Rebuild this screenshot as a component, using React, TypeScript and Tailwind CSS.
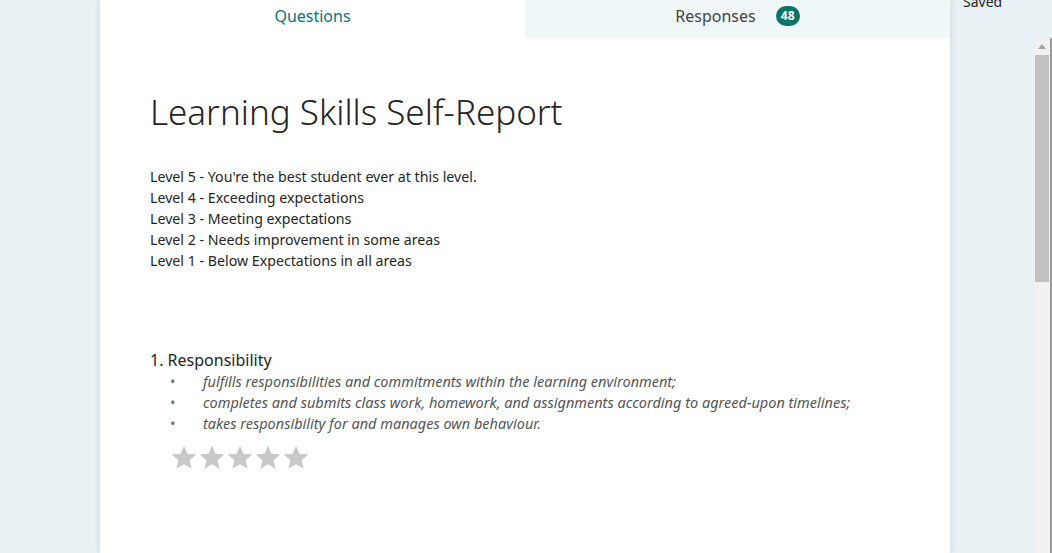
const levels = [
  "Level 5 - You're the best student ever at this level.",
  "Level 4 - Exceeding expectations",
  "Level 3 - Meeting expectations",
  "Level 2 - Needs improvement in some areas",
  "Level 1 - Below Expectations in all areas",
];

const bullets = [
  "fulfills responsibilities and commitments within the learning environment;",
  "completes and submits class work, homework, and assignments according to agreed-upon timelines;",
  "takes responsibility for and manages own behaviour.",
];

function Star() {
  return (
    <svg width="28" height="27" viewBox="0 0 24 24" className="fill-[#c8c8c8]">
      <path d="M12 1.5l3.1 7.2 7.8.6-5.9 5.1 1.8 7.6L12 17.9 5.2 22l1.8-7.6-5.9-5.1 7.8-.6z" />
    </svg>
  );
}

export default function App() {
  return (
    <div className="flex h-[553px] w-full overflow-hidden bg-[#e8f1f4] font-['Noto_Sans',sans-serif] text-[#252525]">
      <div className="relative flex-1">
        <div className="ml-[100px] flex h-full w-[850px] flex-col shadow-[0_0_8px_rgba(0,0,0,0.12)]">
          <div className="flex h-[38px] shrink-0">
            <div className="flex w-[425px] items-center justify-center bg-white pb-[6px] text-[16px] text-[#03787c]">
              Questions
            </div>
            <div className="flex w-[425px] items-center justify-center gap-5 bg-[#f0f7f9] pb-[6px] text-[16px] text-[#444]">
              <span>Responses</span>
              <span className="flex h-[20px] min-w-[24px] items-center justify-center rounded-full bg-[#077568] px-1 text-[12px] font-bold text-white">
                48
              </span>
            </div>
          </div>
          <div className="flex-1 bg-white px-[50px] pt-[50px]">
            <h1 className="text-[35px] font-light leading-[48px] text-[#252525]">
              Learning Skills Self-Report
            </h1>
            <div className="mt-[30px] text-[14.2px] leading-[21px]">
              {levels.map((l) => (
                <div key={l}>{l}</div>
              ))}
            </div>
            <div className="mt-[77px]">
              <div className="text-[16px] leading-[24px]">1. Responsibility</div>
              <ul className="-mt-[1px] text-[14.5px] leading-[21px] italic text-[#555]">
                {bullets.map((b) => (
                  <li key={b} className="flex">
                    <span className="w-[53px] shrink-0 pl-[20px] not-italic text-[#6f6f86]">•</span>
                    <span>{b}</span>
                  </li>
                ))}
              </ul>
              <div className="ml-[20px] mt-[10px] flex">
                {[0, 1, 2, 3, 4].map((i) => (
                  <Star key={i} />
                ))}
              </div>
            </div>
          </div>
        </div>
        <div className="absolute left-[963px] top-[-9px] text-[14px] text-[#252525]">Saved</div>
      </div>
      <div className="flex w-[18px] flex-col pt-[38px]">
        <div className="flex flex-1">
          <div className="flex w-[16px] flex-col bg-[#f1f1f1]">
            <div className="flex h-[17px] items-center justify-center">
              <svg width="8" height="5" viewBox="0 0 8 5">
                <path d="M4 0L8 5H0z" fill="#a3a3a3" />
              </svg>
            </div>
            <div className="mx-[1px] h-[227px] bg-[#c1c1c1]" />
          </div>
          <div className="w-[2px] bg-[#9a9a9a]" />
        </div>
      </div>
    </div>
  );
}
